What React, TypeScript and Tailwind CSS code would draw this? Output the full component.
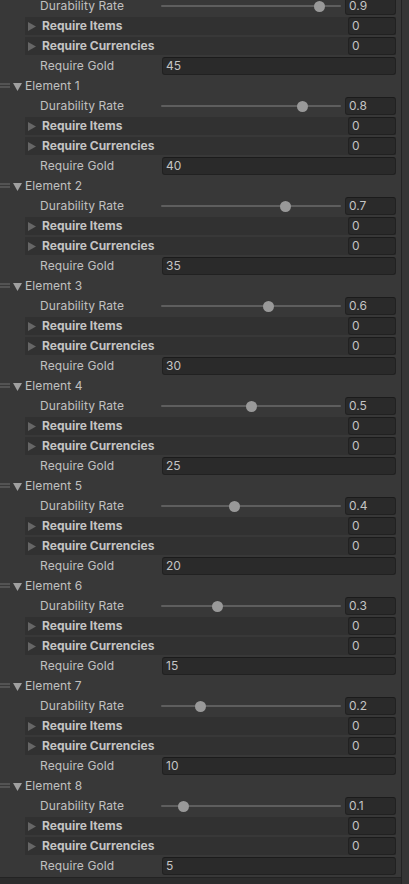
import React from "react";

const font = { fontFamily: "Inter, 'Noto Sans', sans-serif" };

function Handle() {
  return (
    <svg width="10" height="6" viewBox="0 0 10 6" className="shrink-0">
      <rect x="0" y="0.5" width="10" height="1" fill="#6e6e6e" />
      <rect x="0" y="3.5" width="10" height="1" fill="#6e6e6e" />
    </svg>
  );
}

function TriDown() {
  return (
    <svg width="9" height="8" viewBox="0 0 9 8" className="shrink-0">
      <polygon points="0,0 9,0 4.5,8" fill="#a0a0a0" />
    </svg>
  );
}

function TriRight() {
  return (
    <svg width="8" height="9" viewBox="0 0 8 9" className="shrink-0">
      <polygon points="0,0 8,4.5 0,9" fill="#666666" />
    </svg>
  );
}

function Field({ value, className }: { value: string; className: string }) {
  return (
    <div
      className={`h-[18px] rounded-[3px] bg-[#2a2a2a] border border-[#212121] border-t-[#1b1b1b] flex items-center pl-[3px] text-[12px] text-[#c4c4c4] ${className}`}
    >
      {value}
    </div>
  );
}

function DurabilityRow({ v }: { v: number }) {
  return (
    <div className="h-[20px] flex items-center pl-[40px] pr-[5px]">
      <div className="w-[121px] shrink-0 text-[12px] text-[#c0c0c0] tracking-[0.1px]">Durability Rate</div>
      <div className="relative w-[182px] shrink-0 h-[20px] flex items-center">
        <div className="w-[180px] h-[2px] bg-[#5e5e5e] rounded-full" />
        <div
          className="absolute top-[5px] w-[11px] h-[11px] rounded-full bg-[#999999]"
          style={{ left: 170 * v - 0.5 }}
        />
      </div>
      <Field value={v.toFixed(1)} className="w-[51px] ml-[2px]" />
    </div>
  );
}

function FoldRow({ label }: { label: string }) {
  return (
    <div className="h-[20px] flex items-center pl-[25px] pr-[5px]">
      <div className="flex-1 h-[18px] bg-[#313131] flex items-center">
        <div className="ml-[3px] mr-[6px]">
          <TriRight />
        </div>
        <div className="flex-1 text-[12px] font-bold text-[#c4c4c4]">{label}</div>
        <Field value="0" className="w-[48px]" />
      </div>
    </div>
  );
}

function GoldRow({ g }: { g: number }) {
  return (
    <div className="h-[20px] flex items-center pl-[40px] pr-[5px]">
      <div className="w-[122px] shrink-0 text-[12px] text-[#c0c0c0] tracking-[0.1px]">Require Gold</div>
      <Field value={String(g)} className="flex-1" />
    </div>
  );
}

function Body({ v, g }: { v: number; g: number }) {
  return (
    <>
      <DurabilityRow v={v} />
      <FoldRow label="Require Items" />
      <FoldRow label="Require Currencies" />
      <GoldRow g={g} />
    </>
  );
}

function Header({ n }: { n: number }) {
  return (
    <div className="h-[20px] flex items-center">
      <div className="mr-[3px]">
        <Handle />
      </div>
      <div className="mr-[3px] mt-[1px]">
        <TriDown />
      </div>
      <div className="text-[12px] text-[#c0c0c0] tracking-[0.1px]">Element {n}</div>
    </div>
  );
}

export default function App() {
  const els = [1, 2, 3, 4, 5, 6, 7, 8];
  return (
    <div className="w-[409px] h-[884px] overflow-hidden bg-[#383838] flex" style={font}>
      <div className="w-[401px] shrink-0 flex flex-col">
        <div className="mt-[-4px] flex flex-col">
          <Body v={0.9} g={45} />
          {els.map((n) => (
            <div key={n}>
              <Header n={n} />
              <Body v={Math.round((0.9 - n * 0.1) * 10) / 10} g={45 - n * 5} />
            </div>
          ))}
        </div>
        <div className="mt-[1px] h-[1px] bg-[#232323]" />
        <div className="flex-1 bg-[#2c2c2c]" />
      </div>
      <div className="w-[1px] bg-[#232323]" />
      <div className="flex-1 bg-[#353535]" />
    </div>
  );
}
